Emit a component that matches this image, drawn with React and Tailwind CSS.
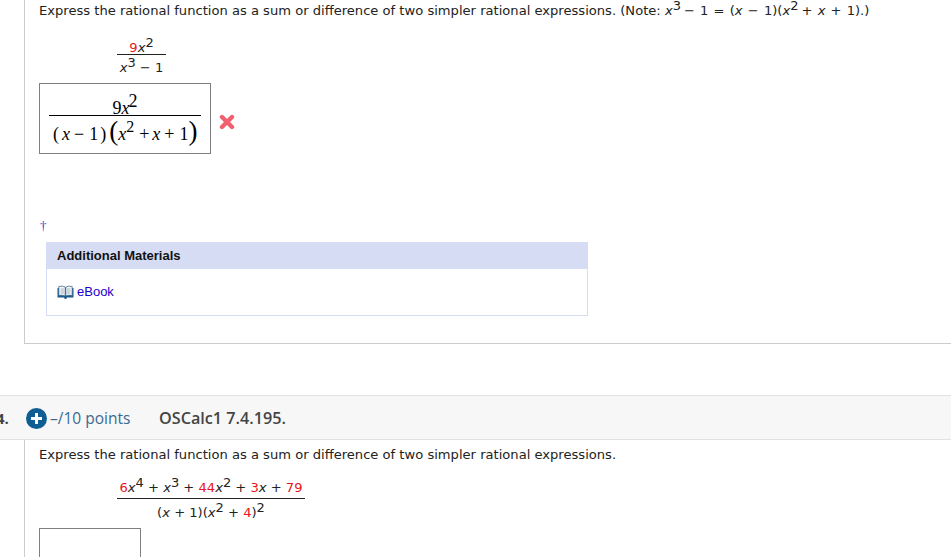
const Sup = ({ children }) => <sup className="text-[13px] leading-none top-0 align-[5px]">{children}</sup>;
const V = ({ children }) => <i className="italic">{children}</i>;
const R = ({ children }) => <span className="text-[#e8141c]">{children}</span>;

function Book() {
  return (
    <svg width="17" height="15" viewBox="0 0 17 15" className="shrink-0">
      <path d="M0.5 3 H16.5 V12.5 H10 L9.2 14 H7.8 L7 12.5 H0.5 Z" fill="#1f5a8c" />
      <path d="M1.8 1.5 Q5.5 0.5 8.2 2 V11 Q5.5 9.8 1.8 10.5 Z" fill="#f2f6f9" stroke="#2a5e88" strokeWidth="0.7" />
      <path d="M15.2 1.5 Q11.5 0.5 8.8 2 V11 Q11.5 9.8 15.2 10.5 Z" fill="#f2f6f9" stroke="#2a5e88" strokeWidth="0.7" />
      <path d="M3.5 4H7M3.5 6H7M3.5 8H7M10 4H13.5M10 6H13.5M10 8H13.5" stroke="#9aa8b2" strokeWidth="0.8" />
    </svg>
  );
}

export default function App() {
  return (
    <div className="w-[951px] h-[557px] overflow-hidden bg-white text-[#222] font-['DejaVu_Sans',Verdana,sans-serif] text-[13.1px]">
      <section className="ml-[24px] h-[344px] border-l border-b border-[#cccccc] pl-[14px] flex flex-col items-start">
        <p className="-mt-px h-[18px] leading-[18px] whitespace-nowrap">
          Express the rational function as a sum or difference of two simpler rational expressions. (Note:{" "}
          <span className="[word-spacing:1px]"><V>x</V><Sup>3</Sup><span className="ml-[3px]">−</span> 1 = (<V>x</V> − 1)(<V>x</V><Sup>2</Sup><span className="ml-[3px]">+</span> <V>x</V> + 1).)</span>
        </p>

        <div className="ml-[78px] mt-[16px] w-[49px] flex flex-col items-center leading-none">
          <div className="h-[21px] pt-[3px] whitespace-nowrap"><R>9</R><V>x</V><Sup>2</Sup></div>
          <div className="w-full h-px bg-[#222]" />
          <div className="h-[18px] pt-px whitespace-nowrap"><V>x</V><Sup>3</Sup><span className="ml-[4px]">− 1</span></div>
        </div>

        <div className="flex items-center mt-[10px]">
          <div className="w-[172px] h-[71px] border border-[#808080] flex flex-col items-center pt-[8px] font-['Liberation_Serif',serif] text-[18px] text-black">
            <div className="h-[23px] leading-none whitespace-nowrap"><span>9</span><i>x</i><sup className="text-[18px] leading-none top-0 align-[7px] -ml-px">2</sup></div>
            <div className="w-[152px] h-px bg-black" />
            <div className="h-[32px] w-[152px] pl-[4px] leading-[37px] whitespace-nowrap">
              <span>(</span><i className="ml-[3px]">x</i><span className="ml-[4px]">−</span><span className="ml-[5px]">1</span><span className="ml-[2px]">)</span>
              <span className="text-[27px] font-light leading-none ml-[3px]">(</span>
              <i>x</i><sup className="text-[16px] leading-none top-0 align-[8px]">2</sup><span className="ml-[5px]">+</span><i className="ml-[3px]">x</i><span className="ml-[4px]">+</span><span className="ml-[5px]">1</span>
              <span className="text-[27px] font-light leading-none">)</span>
            </div>
          </div>
          <svg width="16" height="16" viewBox="0 0 16 16" className="ml-[8px] mt-[6px]">
            <path d="M3 3 L13 13 M13 3 L3 13" stroke="#f0606e" strokeWidth="4.4" strokeLinecap="round" />
          </svg>
        </div>

        <div className="mt-[63px] ml-px h-[18px] leading-[18px] text-[#3333cc] font-['Liberation_Serif',serif] text-[13px]">†</div>

        <div className="mt-[7px] ml-[7px] w-[542px] h-[74px] border border-[#d5dcf4] border-t-0 font-['Liberation_Sans',Arial,sans-serif]">
          <div className="-ml-px -mr-px h-[27px] bg-[#d5dcf4] pl-[11px] text-[13px] leading-[27px] font-bold text-[#111]">Additional Materials</div>
          <div className="flex items-center gap-[3px] pl-[10px] mt-[14px] h-[18px] text-[13px] text-[#2200cc]">
            <Book />
            <span>eBook</span>
          </div>
        </div>
      </section>

      <header className="mt-[51px] h-[45px] pt-[2px] bg-[#f7f7f7] border-t border-b border-[#e2e2e2] flex items-center font-['Open_Sans',sans-serif] relative">
        <span className="absolute left-[-4px] text-[15px] font-bold text-[#444]">4.</span>
        <span className="ml-[26px] w-[21px] h-[21px] rounded-full bg-[#0f5e93] flex items-center justify-center">
          <svg width="13" height="13" viewBox="0 0 13 13"><path d="M6.5 1V12M1 6.5H12" stroke="white" strokeWidth="3" /></svg>
        </span>
        <span className="ml-[3px] w-[81px] whitespace-nowrap text-[15.5px] font-medium text-[#3a6a91]">–/10 points</span>
        <span className="ml-[28px] text-[16.2px] font-semibold text-[#444]">OSCalc1 7.4.195.</span>
      </header>

      <section className="ml-[24px] h-[117px] border-l border-[#cccccc] pl-[14px] flex flex-col items-start">
        <p className="mt-[6px] h-[18px] shrink-0 leading-[18px] whitespace-nowrap">Express the rational function as a sum or difference of two simpler rational expressions.</p>
        <div className="ml-[78px] mt-[12px] w-[188px] shrink-0 flex flex-col items-center leading-none">
          <div className="h-[22px] whitespace-pre"><R>6</R><V>x</V><Sup>4</Sup> + <V>x</V><Sup>3</Sup> + <R>44</R><V>x</V><Sup>2</Sup> + <R>3</R><V>x</V> + <R>79</R></div>
          <div className="w-full h-px bg-[#222]" />
          <div className="h-[16px] pt-[2px] whitespace-pre">(<V>x</V> + 1)(<V>x</V><Sup>2</Sup> + <R>4</R>)<Sup>2</Sup></div>
        </div>
        <div className="mt-[13px] w-[102px] h-[60px] shrink-0 border border-[#808080]" />
      </section>
    </div>
  );
}
